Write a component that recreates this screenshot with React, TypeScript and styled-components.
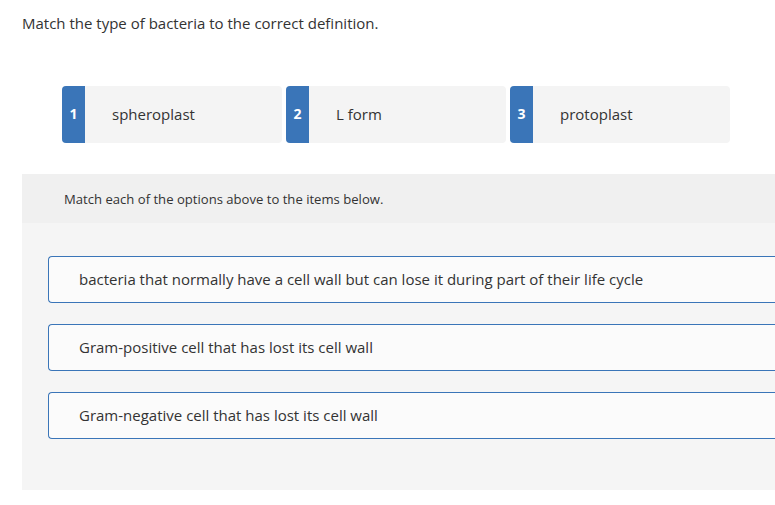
import React from "react";
import styled, { createGlobalStyle } from "styled-components";

const Global = createGlobalStyle`
  *, *::before, *::after { box-sizing: border-box; }
  html, body { margin: 0; padding: 0; background: #fff; overflow: hidden; }
  body { font-family: "Open Sans", "Liberation Sans", sans-serif; color: #333; }
`;

const Page = styled.div`
  padding: 13px 0 0 22px;
  width: 820px;
`;

const Title = styled.div`
  font-size: 15px;
  line-height: 20px;
  color: #333;
`;

const Options = styled.div`
  display: flex;
  gap: 4px;
  margin: 53px 0 0 40px;
`;

const Card = styled.div`
  display: flex;
  width: 220px;
  height: 57px;
  background: #f4f4f4;
  border-radius: 4px;
  overflow: hidden;
`;

const Tab = styled.div`
  width: 23px;
  background: #3a75b8;
  color: #fff;
  font-weight: 700;
  font-size: 14px;
  display: flex;
  align-items: center;
  justify-content: center;
  padding-bottom: 2px;
`;

const CardLabel = styled.div`
  display: flex;
  align-items: center;
  padding-left: 27px;
  padding-bottom: 2px;
  font-size: 15px;
  color: #333;
`;

const Panel = styled.div`
  margin-top: 31px;
  background: #f5f5f5;
  padding-bottom: 51px;
`;

const PanelHeader = styled.div`
  background: #f0f0f0;
  height: 49px;
  display: flex;
  align-items: center;
  padding-left: 42px;
  font-size: 13.1px;
  color: #333;
`;

const Items = styled.div`
  display: flex;
  flex-direction: column;
  gap: 21px;
  padding: 33px 0 0 26px;
`;

const Item = styled.div`
  height: 47px;
  border: 1px solid #3a75b8;
  border-right: none;
  border-radius: 4px 0 0 4px;
  background: #fbfbfb;
  display: flex;
  align-items: center;
  padding-left: 30px;
  padding-bottom: 1px;
  font-size: 15px;
  color: #333;
`;

const options = ["spheroplast", "L form", "protoplast"];
const items = [
  "bacteria that normally have a cell wall but can lose it during part of their life cycle",
  "Gram-positive cell that has lost its cell wall",
  "Gram-negative cell that has lost its cell wall",
];

export default function App() {
  return (
    <>
      <Global />
      <Page>
        <Title>Match the type of bacteria to the correct definition.</Title>
        <Options>
          {options.map((o, i) => (
            <Card key={o}>
              <Tab>{i + 1}</Tab>
              <CardLabel>{o}</CardLabel>
            </Card>
          ))}
        </Options>
        <Panel>
          <PanelHeader>Match each of the options above to the items below.</PanelHeader>
          <Items>
            {items.map((t) => (
              <Item key={t}>{t}</Item>
            ))}
          </Items>
        </Panel>
      </Page>
    </>
  );
}
